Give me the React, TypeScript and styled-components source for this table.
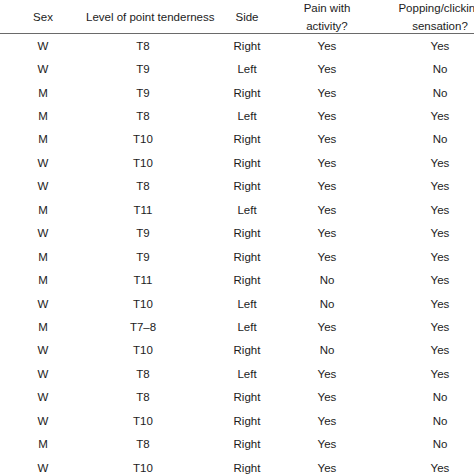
import React from 'react';
import styled, { createGlobalStyle } from 'styled-components';

const GlobalStyle = createGlobalStyle`
  html, body {
    margin: 0;
    padding: 0;
    background: #ffffff;
  }
  body {
    font-family: "Liberation Sans", Arial, Helvetica, sans-serif;
    color: #1c1c1c;
  }
`;

const COLUMNS = '86px 114px 94px 66px 160px';

const Page = styled.div`
  width: 474px;
  height: 474px;
  overflow: hidden;
  background: #fff;
`;

const Table = styled.div`
  width: 520px;
  display: flex;
  flex-direction: column;
  font-size: 11.5px;
`;

const HeaderRow = styled.div`
  display: grid;
  grid-template-columns: ${COLUMNS};
  height: 33px;
  align-items: center;
  border-bottom: 1.5px solid #6a6a6a;
`;

const HeaderCell = styled.div`
  text-align: center;
  line-height: 17.6px;
  white-space: nowrap;
`;

const Row = styled.div`
  display: grid;
  grid-template-columns: ${COLUMNS};
  height: 23.45px;
  align-items: center;
`;

const Cell = styled.div`
  text-align: center;
  line-height: 14px;
  white-space: nowrap;
`;

type Answer = 'Yes' | 'No';

interface Patient {
  sex: 'W' | 'M';
  level: string;
  side: 'Right' | 'Left';
  pain: Answer;
  popping: Answer;
}

const patients: Patient[] = [
  { sex: 'W', level: 'T8', side: 'Right', pain: 'Yes', popping: 'Yes' },
  { sex: 'W', level: 'T9', side: 'Left', pain: 'Yes', popping: 'No' },
  { sex: 'M', level: 'T9', side: 'Right', pain: 'Yes', popping: 'No' },
  { sex: 'M', level: 'T8', side: 'Left', pain: 'Yes', popping: 'Yes' },
  { sex: 'M', level: 'T10', side: 'Right', pain: 'Yes', popping: 'No' },
  { sex: 'W', level: 'T10', side: 'Right', pain: 'Yes', popping: 'Yes' },
  { sex: 'W', level: 'T8', side: 'Right', pain: 'Yes', popping: 'Yes' },
  { sex: 'M', level: 'T11', side: 'Left', pain: 'Yes', popping: 'Yes' },
  { sex: 'W', level: 'T9', side: 'Right', pain: 'Yes', popping: 'Yes' },
  { sex: 'M', level: 'T9', side: 'Right', pain: 'Yes', popping: 'Yes' },
  { sex: 'M', level: 'T11', side: 'Right', pain: 'No', popping: 'Yes' },
  { sex: 'W', level: 'T10', side: 'Left', pain: 'No', popping: 'Yes' },
  { sex: 'M', level: 'T7–8', side: 'Left', pain: 'Yes', popping: 'Yes' },
  { sex: 'W', level: 'T10', side: 'Right', pain: 'No', popping: 'Yes' },
  { sex: 'W', level: 'T8', side: 'Left', pain: 'Yes', popping: 'Yes' },
  { sex: 'W', level: 'T8', side: 'Right', pain: 'Yes', popping: 'No' },
  { sex: 'W', level: 'T10', side: 'Right', pain: 'Yes', popping: 'No' },
  { sex: 'M', level: 'T8', side: 'Right', pain: 'Yes', popping: 'No' },
  { sex: 'W', level: 'T10', side: 'Right', pain: 'Yes', popping: 'Yes' },
];

const App = () => (
  <Page>
    <GlobalStyle />
    <Table>
      <HeaderRow>
        <HeaderCell>Sex</HeaderCell>
        <HeaderCell>Level of point tenderness</HeaderCell>
        <HeaderCell>Side</HeaderCell>
        <HeaderCell>
          Pain with
          <br />
          activity?
        </HeaderCell>
        <HeaderCell>
          Popping/clicking
          <br />
          sensation?
        </HeaderCell>
      </HeaderRow>
      {patients.map((p, i) => (
        <Row key={i}>
          <Cell>{p.sex}</Cell>
          <Cell>{p.level}</Cell>
          <Cell>{p.side}</Cell>
          <Cell>{p.pain}</Cell>
          <Cell>{p.popping}</Cell>
        </Row>
      ))}
    </Table>
  </Page>
);

export default App;
